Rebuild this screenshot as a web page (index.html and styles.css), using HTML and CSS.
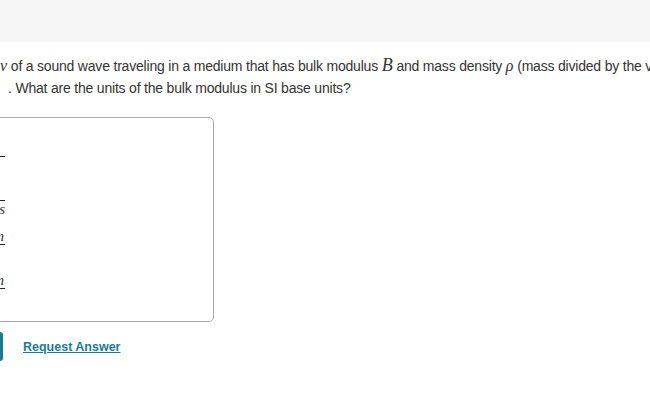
FILE: index.html
```html
<!DOCTYPE html>
<html lang="en">
<head>
    <meta charset="UTF-8">
    <meta name="viewport" content="width=device-width, initial-scale=1.0">
    <title>Part A</title>
    <link rel="stylesheet" href="styles.css">
</head>
<body>
    <div class="topbar"></div>
    <div class="problem">
        <!-- question text -->
        <div class="question">
            <p class="line"><span class="mi">v</span> of a sound wave traveling in a medium that has bulk modulus <span class="mi big">B</span> and mass density <span class="mi">ρ</span> (mass divided by the volume)</p>
            <p class="line"><span class="tail-frac"></span>. What are the units of the bulk modulus in SI base units?</p>
        </div>
        <!-- answer choices -->
        <div class="choices">
            <div class="choice">
                <span class="cell"><span class="frac wide"><span class="num">kg</span><span class="den">m s</span></span></span>
            </div>
            <div class="choice">
                <span class="cell"><span class="frac"><span class="num">kg</span><span class="den">m² s</span></span></span>
            </div>
            <div class="choice">
                <span class="cell"><span class="frac"><span class="num">kg m</span><span class="den">s</span></span></span>
            </div>
            <div class="choice">
                <span class="cell"><span class="frac"><span class="num">kg m</span><span class="den">s²</span></span></span>
            </div>
        </div>
        <!-- actions -->
        <div class="actions">
            <button class="submit" type="button">Submit</button>
            <a class="request" href="#">Request Answer</a>
        </div>
    </div>
</body>
</html>
```

FILE: styles.css
```css
:root {
    --text-color: #333333;
    --bar-color: #f5f5f5;
    --border-color: #a9a9a9;
    --teal: #157c9c;
}
body {
    margin: 0;
    font-family: 'Liberation Sans', Arial, sans-serif;
    color: var(--text-color);
    background: #ffffff;
    overflow: hidden;
}
.topbar {
    height: 42px;
    background-color: var(--bar-color);
}
.problem {
    padding-top: 12px;
}
.question .line {
    margin: 0;
    font-size: 14px;
    letter-spacing: -0.2px;
    line-height: 22px;
    white-space: nowrap;
}
.mi {
    font-family: 'Liberation Serif', 'Times New Roman', serif;
    font-style: italic;
    font-size: 16px;
    letter-spacing: 0;
}
.mi.big {
    font-size: 18px;
}
.tail-frac {
    display: inline-block;
    width: 8px;
}
.choices {
    box-sizing: border-box;
    width: 415px;
    height: 205px;
    margin: 18px 0 0 -201px;
    padding: 16px 0 0 145px;
    border: 1px solid var(--border-color);
    border-radius: 5px;
}
.choice {
    height: 44px;
    display: flex;
    align-items: center;
}
.cell {
    width: 60px;
    display: flex;
    justify-content: flex-end;
}
.frac {
    display: inline-flex;
    flex-direction: column;
    align-items: center;
    font-family: 'Liberation Serif', 'Times New Roman', serif;
    font-style: italic;
    font-size: 15px;
    line-height: 16px;
}
.frac .num {
    border-bottom: 1px solid #222;
    padding: 0 1px;
    align-self: stretch;
    text-align: center;
}
.frac.wide .num {
    padding: 0 10px;
}
.actions {
    display: flex;
    align-items: center;
    gap: 20px;
    margin-top: 10px;
}
.submit {
    width: 80px;
    height: 29px;
    margin-left: -77px;
    border: none;
    border-radius: 3px;
    background-color: var(--teal);
    color: #ffffff;
    font-family: inherit;
    font-size: 14px;
}
.request {
    color: var(--teal);
    font-size: 12.5px;
    font-weight: bold;
    text-decoration: underline;
}
```
